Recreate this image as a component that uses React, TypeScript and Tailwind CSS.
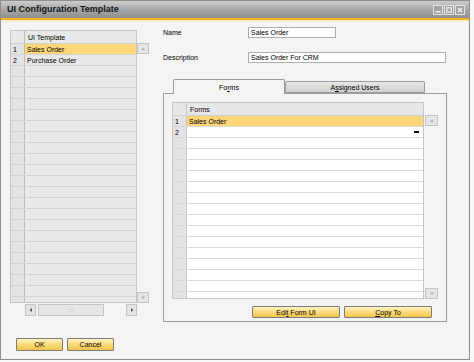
import React from 'react';

const ScrollBtn = ({ dir }: { dir: 'up' | 'down' | 'left' | 'right' }) => {
  const pts = {
    up: '1,4 3,1.5 5,4',
    down: '1,1.5 3,4 5,1.5',
    left: '4,1 1.5,3 4,5',
    right: '2,1 4.5,3 2,5',
  }[dir];
  return (
    <div className="flex items-center justify-center w-full h-full bg-[#e4e4e4] border border-[#c4c4c4]">
      <svg width="6" height="6" viewBox="0 0 6 6">
        <polygon points={pts} fill={dir === 'left' || dir === 'right' ? '#555' : '#b0b0b0'} />
      </svg>
    </div>
  );
};

const YellowButton = ({ children, w }: { children: React.ReactNode; w: string }) => (
  <div
    className={`${w} flex items-center justify-center bg-gradient-to-b from-[#fff3c2] via-[#fbdb7c] to-[#f1c445] border border-[#7c7c7c] rounded-[1px] text-[7px] leading-none`}
  >
    {children}
  </div>
);

const LeftGrid = () => {
  const rows = ['Sales Order', 'Purchase Order'];
  return (
    <div className="flex h-[273px]">
      <div className="w-[127px] h-full border border-[#c6c6c6] bg-[#e9e9e9] overflow-hidden flex flex-col">
        <div className="flex h-[13px] shrink-0 border-b border-[#cfcfcf]">
          <div className="w-[14px] border-r border-[#bdbdbd]" />
          <div className="flex-1 flex items-center pl-[3px]">UI Template</div>
        </div>
        {Array.from({ length: 24 }).map((_, i) => (
          <div
            key={i}
            className={`flex h-[11px] shrink-0 border-b border-[#d3d3d3] ${i === 0 ? 'bg-[#fdd67a]' : ''}`}
          >
            <div className="w-[14px] border-r border-[#bdbdbd] bg-[#e3e3e3] flex items-center pl-[2px]">
              {i < 2 ? i + 1 : ''}
            </div>
            <div className="flex-1 flex items-center pl-[2px]">{rows[i] ?? ''}</div>
          </div>
        ))}
      </div>
      <div className="w-[12px] flex flex-col pt-[13px]">
        <div className="h-[11px]">
          <ScrollBtn dir="up" />
        </div>
        <div className="flex-1" />
        <div className="h-[11px]">
          <ScrollBtn dir="down" />
        </div>
      </div>
    </div>
  );
};

const FormsGrid = () => (
  <div className="flex h-[197px]">
    <div className="w-[252px] h-full border border-[#c6c6c6] bg-white overflow-hidden flex flex-col">
      <div className="flex h-[13px] shrink-0 border-b border-[#d0d0d0] bg-[#e7e7e7]">
        <div className="w-[14px] border-r border-[#c8c8c8]" />
        <div className="flex-1 flex items-center pl-[3px]">Forms</div>
      </div>
      {Array.from({ length: 17 }).map((_, i) => (
        <div
          key={i}
          className={`flex h-[11px] shrink-0 border-b border-[#dadada] ${i === 0 ? 'bg-[#fdd67a]' : ''}`}
        >
          <div className="w-[14px] border-r border-[#c8c8c8] bg-[#e4e4e4] flex items-center pl-[2px]">
            {i < 2 ? i + 1 : ''}
          </div>
          <div className="flex-1 flex items-center justify-between pl-[2px] pr-[4px]">
            <span>{i === 0 ? 'Sales Order' : ''}</span>
            {i === 1 && (
              <svg width="5" height="3" viewBox="0 0 5 3">
                <rect x="0" y="0" width="5" height="2" fill="#111" />
              </svg>
            )}
          </div>
        </div>
      ))}
    </div>
    <div className="w-[13px] ml-[1px] flex flex-col pt-[13px]">
      <div className="h-[11px]">
        <ScrollBtn dir="up" />
      </div>
      <div className="flex-1" />
      <div className="h-[11px]">
        <ScrollBtn dir="down" />
      </div>
    </div>
  </div>
);

const TitleBar = () => (
  <div className="shrink-0">
    <div className="h-[17px] flex items-center justify-between pl-[6px] pr-[4px] bg-gradient-to-b from-[#cdcdcd] via-[#a9a9a9] to-[#8d8d8d]">
      <span className="text-[9px] font-bold text-[#141414] leading-none">UI Configuration Template</span>
      <div className="flex gap-[1px]">
        {['min', 'max', 'close'].map((k) => (
          <div key={k} className="w-[10px] h-[10px] bg-[#a2a2a2] border border-[#e2e2e2] flex items-center justify-center">
            <svg width="6" height="6" viewBox="0 0 6 6">
              {k === 'min' && <rect x="0.5" y="4" width="5" height="1.5" fill="#f2f2f2" />}
              {k === 'max' && <rect x="0.8" y="0.8" width="4.4" height="4.4" fill="none" stroke="#f2f2f2" strokeWidth="1.2" />}
              {k === 'close' && (
                <path d="M1 1 L5 5 M5 1 L1 5" stroke="#f2f2f2" strokeWidth="1.4" />
              )}
            </svg>
          </div>
        ))}
      </div>
    </div>
    <div className="h-[2px] bg-[#f3b321]" />
    <div className="h-[2px] bg-gradient-to-b from-[#fbe7ac] to-[#f4f4f4]" />
  </div>
);

export default function App() {
  return (
    <div className="w-[474px] h-[362px] bg-[#f8f8f8] font-['Liberation_Sans',Arial,sans-serif] text-[7px] leading-none text-black">
      <div className="w-[470px] h-[360px] border border-[#8e8e8e] bg-[#f4f4f4] flex flex-col overflow-hidden">
        <TitleBar />
        <div className="flex pl-[9px] pt-[5px]">
          {/* left: templates list */}
          <div className="w-[139px] pt-[3px] flex flex-col">
            <LeftGrid />
            <div className="flex h-[12px] ml-[15px] w-[112px] mt-[1px] gap-[2px]">
              <div className="w-[11px]">
                <ScrollBtn dir="left" />
              </div>
              <div className="w-[66px] bg-[#e6e6e6] border border-[#c4c4c4] flex items-center justify-center text-[#9a9a9a] text-[6px]">
                :::
              </div>
              <div className="flex-1" />
              <div className="w-[11px]">
                <ScrollBtn dir="right" />
              </div>
            </div>
            <div className="flex gap-[4px] ml-[6px] mt-[22px] h-[13px]">
              <YellowButton w="w-[47px]">OK</YellowButton>
              <YellowButton w="w-[47px]">Cancel</YellowButton>
            </div>
          </div>

          {/* right: details */}
          <div className="ml-[14px] w-[284px] flex flex-col">
            <div className="flex items-center h-[11px]">
              <div className="w-[85px]">Name</div>
              <div className="w-[88px] h-[11px] bg-white border border-[#aeaeae] flex items-center pl-[2px]">
                Sales Order
              </div>
            </div>
            <div className="flex items-center h-[11px] mt-[14px]">
              <div className="w-[85px]">Description</div>
              <div className="w-[198px] h-[11px] bg-white border border-[#aeaeae] flex items-center pl-[2px]">
                Sales Order For CRM
              </div>
            </div>

            <div className="flex items-end h-[14px] mt-[16px] pl-[10px]">
              <div className="relative z-10 -mb-px w-[112px] h-[15px] bg-[#f4f4f4] border border-b-0 border-[#9c9c9c] rounded-t-[2px] flex items-center justify-center">
                Fo<span className="underline">r</span>ms
              </div>
              <div className="w-[140px] h-[12px] bg-gradient-to-b from-[#e8e8e8] to-[#cfcfcf] border border-[#9c9c9c] rounded-t-[2px] flex items-center justify-center">
                A<span className="underline">s</span>signed Users
              </div>
            </div>
            <div className="w-[284px] h-[229px] border border-[#9c9c9c] pl-[8px] pt-[8px] flex flex-col">
              <FormsGrid />
              <div className="flex justify-end gap-[4px] mt-[7px] mr-[14px] h-[12px]">
                <YellowButton w="w-[88px]">
                  Edi<span className="underline">t</span>&nbsp;Form UI
                </YellowButton>
                <YellowButton w="w-[88px]">
                  <span className="underline">C</span>opy To
                </YellowButton>
              </div>
            </div>
          </div>
        </div>
      </div>
    </div>
  );
}
